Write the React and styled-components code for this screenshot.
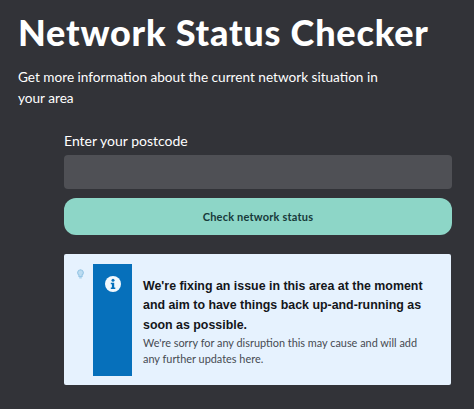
import React from 'react';
import styled, { createGlobalStyle } from 'styled-components';

const Global = createGlobalStyle`
  html, body { margin: 0; padding: 0; background: #323338; }
  body { width: 474px; height: 409px; overflow: hidden; }
`;

const Page = styled.main`
  box-sizing: border-box;
  width: 474px;
  height: 409px;
  background: #323338;
  padding: 10px 18px 0;
  font-family: "Lato", "Noto Sans", sans-serif;
  color: #fff;
`;
const Title = styled.h1`
  margin: 0;
  font-family: "Lato", sans-serif;
  font-size: 36px;
  line-height: 44px;
  font-weight: 900;
  letter-spacing: 0.8px;
  white-space: nowrap;
`;
const Intro = styled.p`
  margin: 13px 0 0;
  width: 380px;
  font-size: 13.6px;
  line-height: 20.5px;
`;
const Form = styled.form`
  margin: 23px 0 0 46px;
  width: 388px;
  display: flex;
  flex-direction: column;
`;
const Label = styled.label`
  font-size: 14px;
  line-height: 20px;
`;
const Input = styled.input`
  box-sizing: border-box;
  margin-top: 4px;
  height: 34px;
  border: 0;
  border-radius: 4px;
  background: #4f5055;
`;
const Button = styled.button`
  margin-top: 9px;
  height: 37px;
  border: 0;
  border-radius: 12px;
  background: #8dd6c7;
  color: #173a3a;
  font-family: "Lato", sans-serif;
  font-size: 11px;
  font-weight: 700;
  letter-spacing: 0.2px;
`;
const Alert = styled.section`
  box-sizing: border-box;
  margin: 19px 0 0 46px;
  width: 387px;
  height: 131px;
  background: #e6f2fe;
  border-radius: 2px;
  display: flex;
  padding: 10px 0 0 13px;
`;
const Bulb = styled.svg`
  width: 7px;
  height: 10px;
  margin: 5px 0 0 0;
  flex: none;
`;
const IconBar = styled.div`
  margin-left: 9px;
  width: 39px;
  height: 112px;
  background: #0670bb;
  display: flex;
  justify-content: center;
  padding-top: 12px;
  box-sizing: border-box;
  flex: none;
`;
const InfoIcon = styled.svg`
  width: 16px;
  height: 16px;
`;
const Body = styled.div`
  margin-left: 11px;
  padding-top: 13px;
`;
const Strong = styled.p`
  margin: 0;
  font-family: "Liberation Sans", Arial, sans-serif;
  font-size: 12.4px;
  line-height: 19.3px;
  font-weight: 700;
  color: #14161a;
  width: 290px;
`;
const Small = styled.p`
  margin: 0;
  font-size: 10.9px;
  line-height: 16px;
  color: #474b52;
  width: 285px;
`;

export default function App() {
  return (
    <Page>
      <Global />
      <Title>Network Status Checker</Title>
      <Intro>Get more information about the current network situation in your area</Intro>
      <Form onSubmit={(e) => e.preventDefault()}>
        <Label htmlFor="pc">Enter your postcode</Label>
        <Input id="pc" />
        <Button type="button">Check network status</Button>
      </Form>
      <Alert>
        <Bulb viewBox="0 0 8 11">
          <path d="M4 .7a3.3 3.3 0 0 0-1.8 6V8.3h3.6V6.7A3.3 3.3 0 0 0 4 .7z" fill="#bcdcf1" stroke="#97c6e5" strokeWidth="1.3" />
          <rect x="2.5" y="9.3" width="3" height="1.2" fill="#97c6e5" />
        </Bulb>
        <IconBar>
          <InfoIcon viewBox="0 0 16 16">
            <circle cx="8" cy="8" r="8" fill="#f2f8fd" />
            <circle cx="8" cy="4.3" r="1.5" fill="#0670bb" />
            <path d="M5.8 6.7h3.4v4.8h1.1v1.6H5.8v-1.6h1.1V8.3H5.8z" fill="#0670bb" />
          </InfoIcon>
        </IconBar>
        <Body>
          <Strong>We're fixing an issue in this area at the moment and aim to have things back up-and-running as soon as possible.</Strong>
          <Small>We're sorry for any disruption this may cause and will add any further updates here.</Small>
        </Body>
      </Alert>
    </Page>
  );
}
